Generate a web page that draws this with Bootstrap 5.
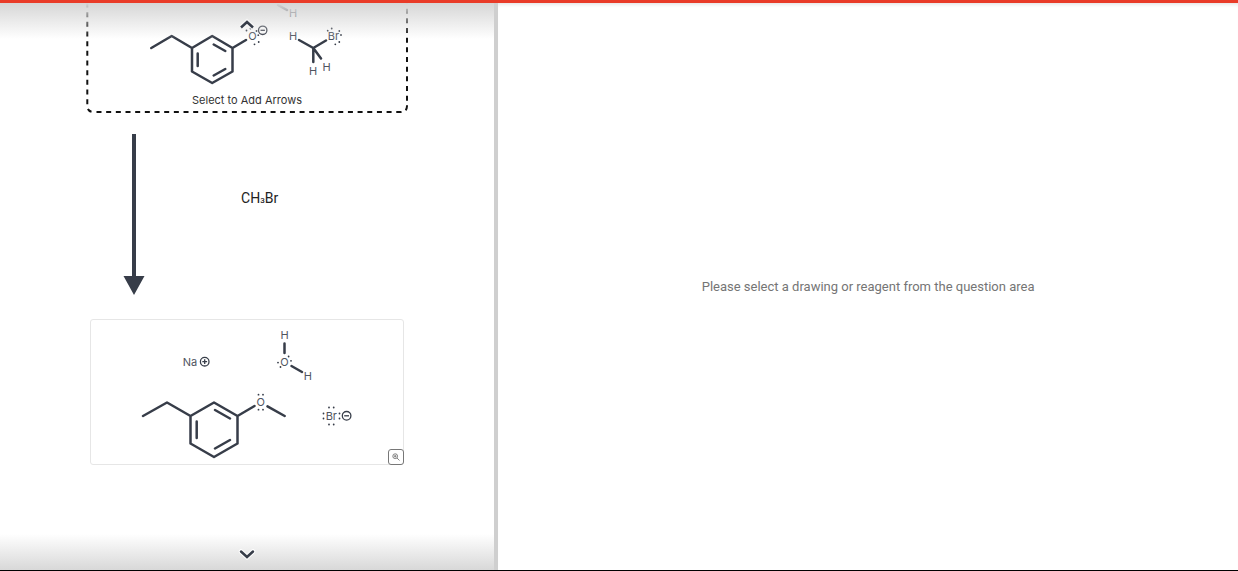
<!DOCTYPE html>
<html lang="en">
<head>
<meta charset="utf-8">
<meta name="viewport" content="width=device-width, initial-scale=1">
<title>Reaction mechanism</title>
<link href="https://cdn.jsdelivr.net/npm/bootstrap@5.3.0/dist/css/bootstrap.min.css" rel="stylesheet">
<style>
  body { font-family: Roboto, "Liberation Sans", sans-serif; color: #222; border-top: 3px solid #e93b28; border-bottom: 1px solid #000; }
  .question-pane { width: calc(40% + 3px); border-right: 4px solid #cfcfcf; }
  .work-pane { color: #757575; box-shadow: inset 0 4px 4px -3px #ddd; }
  .work-pane p { font: 13px/24px Roboto, sans-serif; }
  .scheme { width: 322px; }
  .arrow-box { height: 110px; background: none; }
  .product-box { width: 314px; height: 146px; border: 1px solid #e6e6e6; border-radius: 3px; margin-top: 24px; }
  .reagent-row { margin-top: 21px; padding-left: 37px; gap: 96px; }
  .reagent { font: 14px/24px Roboto, sans-serif; margin-top: 52px; color: #222; }
  .reagent span { font-size: 8px; font-weight: 500; }
  .fade-strip { left: 0; right: 0; height: 36px; pointer-events: none; }
  .fade-top { top: 0; background: linear-gradient(#d6d6d6, rgba(255,255,255,0)); }
  .fade-bottom { bottom: 0; background: linear-gradient(rgba(255,255,255,0), #d8d8d8); }
  .scroll-btn { line-height: 0; }
  .scroll-up { top: 15px; }
  .scroll-down { bottom: 10px; }
  .zoom-btn { width: 16px; height: 16px; right: -1px; bottom: -1px; border: 1px solid #777; border-radius: 3px; background: #fff; line-height: 0; }
  .bonds { fill: none; stroke: #373d49; stroke-width: 2.5; stroke-linecap: round; stroke-linejoin: round; }
  .atoms { font: 11px Inter, sans-serif; fill: #50555f; text-anchor: middle; }
  .dots { fill: none; stroke: #373d49; stroke-width: 1.8; stroke-linecap: round; }
  .charge { fill: none; stroke: #373d49; stroke-width: 1.3; }
  .caption-text { font: 11px Inter, sans-serif; fill: #333; text-anchor: middle; }
</style>
<script src="https://cdn.jsdelivr.net/npm/bootstrap@5.3.0/dist/js/bootstrap.bundle.min.js"></script>
</head>
<body class="vh-100 d-flex overflow-hidden bg-white">
<main class="d-flex flex-grow-1">
  <section class="question-pane flex-shrink-0 position-relative overflow-hidden" aria-label="Question area">
    <div class="scheme mx-auto">
      <button type="button" class="arrow-box d-block w-100 border-0 p-0" aria-label="Select to Add Arrows">
        <svg class="d-block" width="322" height="110" viewBox="86 3 322 110">
          <path fill="none" stroke="#111" stroke-width="2" stroke-dasharray="5 4.67" d="M87.3 2.5V106Q87.3 112 94 112H400Q407 112 407 106V2.5"/>
          <path class="bonds" d="M151.3 48 171.7 36 192 48 212.2 36 232.5 48V71.5L212.2 83 192 71.5V48M197.7 53.5V66M213.7 44.5 225.3 51M213.7 75.5 225.3 69M232.5 48 246 40M299 40 313.3 48 326 40.5M313.3 48V62M313.3 48 321 58.5M278 5 287 10"/>
          <path class="dots" d="M246.5 30.5h.01M250.5 28.5h.01M256.5 31h.01M258.3 35.2h.01M254.5 44.3h.01M258.7 42h.01M327.7 30.7h.01M331.7 28.5h.01M339.3 31h.01M341 35h.01M335.3 44.3h.01M339.3 42h.01"/>
          <g class="atoms"><text x="252.5" y="40">O</text><text x="293" y="40">H</text><text x="333.5" y="40">Br</text><text x="313" y="75">H</text><text x="326.5" y="71">H</text><text x="293" y="17">H</text></g>
          <g class="charge"><circle cx="262.7" cy="30.3" r="4.2"/><path d="M260.5 30.3h4.4"/></g>
          <text class="caption-text" x="247" y="104">Select to Add Arrows</text>
        </svg>
      </button>
      <div class="reagent-row d-flex align-items-start">
        <svg width="22" height="161" viewBox="0 0 22 161" fill="#373d49" aria-hidden="true"><path d="M9 0H13V142H21.5L11 161 .5 142H9Z"/></svg>
        <button type="button" class="reagent border-0 bg-transparent p-0">CH<span>3</span>Br</button>
      </div>
      <div class="product-box mx-auto position-relative">
        <svg class="d-block" width="312" height="144" viewBox="91 320 312 144" role="img" aria-label="Products">
          <path class="bonds" d="M143 416 167 402.5 190.5 416 214 402.5 237.5 416V443.5L214 457 190.5 443.5V416M196.7 421.5V438M215 410 230 418.5M215 448.5 230 440M237.5 416 254.5 406M267.5 406.3 284.7 416M284.5 343.5V353M291.5 366 302 372"/>
          <path class="dots" d="M258.5 394.7h.01M263 394.7h.01M258.5 409.7h.01M263 409.7h.01M278 362.6h.01M280.5 367h.01M288.6 356.5h.01M291 360.8h.01M323.5 413.5h.01M323.5 418.5h.01M339.5 413.5h.01M339.5 418.5h.01M329 407.5h.01M333.7 407.5h.01M329 424.5h.01M333.7 424.5h.01"/>
          <g class="atoms"><text x="190" y="366">Na</text><text x="284.5" y="339">H</text><text x="284.5" y="366">O</text><text x="307.8" y="380">H</text><text x="260.8" y="406">O</text><text x="331.3" y="420">Br</text></g>
          <g class="charge"><circle cx="204.7" cy="361.7" r="4.3"/><path d="M202.3 361.7h4.8M204.7 359.3v4.8"/><circle cx="346.6" cy="415.8" r="4.3"/><path d="M344.2 415.8h4.8"/></g>
        </svg>
        <button type="button" class="zoom-btn position-absolute p-0 d-flex align-items-center justify-content-center" aria-label="Zoom in"><svg width="8" height="8" viewBox="0 0 8 8" fill="none" stroke="#666" stroke-width=".8"><circle cx="3.2" cy="3.2" r="2.4"/><path d="M5 5 7.5 7.5M1.9 3.2h2.6M3.2 1.9v2.6"/></svg></button>
      </div>
    </div>
    <div class="fade-strip fade-top position-absolute"></div>
    <div class="fade-strip fade-bottom position-absolute"></div>
    <button type="button" class="scroll-btn scroll-up position-absolute start-50 translate-middle-x border-0 bg-transparent p-0" aria-label="Scroll up"><svg width="18" height="12" viewBox="0 0 18 12" fill="none"><path d="M3 9.5 9 4l6 5.5" stroke="#f7f7f7" stroke-width="5"/><path d="M3 9.5 9 4l6 5.5" stroke="#373d49" stroke-width="2.5"/></svg></button>
    <button type="button" class="scroll-btn scroll-down position-absolute start-50 translate-middle-x border-0 bg-transparent p-0" aria-label="Scroll down"><svg width="18" height="12" viewBox="0 0 18 12" fill="none" stroke-linecap="round"><path d="M3 3.5 9 9l6-5.5" stroke="#fff" stroke-width="4.5"/><path d="M3 3.5 9 9l6-5.5" stroke="#373d49" stroke-width="2.5"/></svg></button>
  </section>
  <section class="work-pane flex-grow-1 d-flex align-items-center justify-content-center" aria-label="Drawing area">
    <p class="m-0">Please select a drawing or reagent from the question area</p>
  </section>
</main>
</body>
</html>
